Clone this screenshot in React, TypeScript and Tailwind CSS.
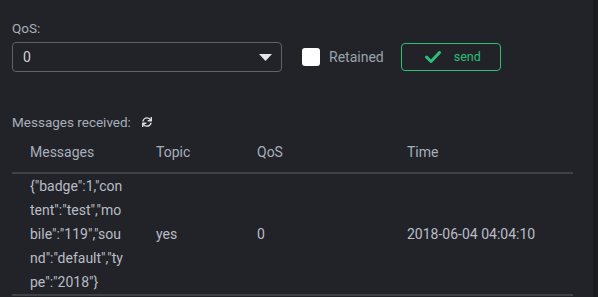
import React from "react";
import { FaSync } from "react-icons/fa";

export default function App() {
  return (
    <div className="flex w-[598px] h-[297px] overflow-hidden bg-[#222329]" style={{ fontFamily: "Roboto, 'Liberation Sans', sans-serif" }}>
      <div className="flex-1 pl-[12px] flex flex-col">
        <div className="mt-[20px] text-[13.5px] leading-[16px] text-[#a7afba]">QoS:</div>
        <div className="mt-[6px] flex items-center">
          <div className="w-[270px] h-[30px] border border-[#5a636e] rounded-[4px] flex items-center justify-between pl-[10px] pr-[9px]">
            <span className="text-[14px] text-[#cfd3d9]">0</span>
            <svg width="13" height="7" viewBox="0 0 13 7"><polygon points="0,0 13,0 6.5,7" fill="#e4e6ea" /></svg>
          </div>
          <div className="ml-[20px] w-[18px] h-[18px] bg-white rounded-[3px]" />
          <span className="ml-[9px] text-[14px] text-[#9ba3ad]">Retained</span>
          <button className="ml-[17px] w-[100px] h-[28px] border border-[#2bbf78] rounded-[4px] flex items-center pl-[22px]">
            <svg width="16" height="12" viewBox="0 0 16 12" className="ml-[1px]">
              <polyline points="1.5,6 6,10.5 14.5,1.5" fill="none" stroke="#2bbf78" strokeWidth="3" strokeLinecap="round" strokeLinejoin="round" />
            </svg>
            <span className="ml-[13px] text-[12.5px] text-[#2bbf78]">send</span>
          </button>
        </div>
        <div className="mt-[42px] flex items-center text-[13.5px] leading-[16px] text-[#a7afba]">
          <span>Messages received:</span>
          <FaSync className="ml-[11px] text-[#d8dbe0]" size={10} />
        </div>
        <table className="mt-[2px] table-fixed w-[561px] border-collapse text-[14px]">
          <colgroup>
            <col className="w-[126px]" />
            <col className="w-[101px]" />
            <col className="w-[150px]" />
            <col className="w-[184px]" />
          </colgroup>
          <thead>
            <tr className="border-b-2 border-[#404147]">
              <th className="h-[41px] pl-[18px] text-left font-normal text-[#a7afba]">Messages</th>
              <th className="pl-[18px] text-left font-normal text-[#a7afba]">Topic</th>
              <th className="pl-[18px] text-left font-normal text-[#a7afba]">QoS</th>
              <th className="pl-[18px] text-left font-normal text-[#a7afba]">Time</th>
            </tr>
          </thead>
          <tbody>
            <tr className="border-b-2 border-[#404147] text-[#b9bdc5]">
              <td className="pl-[18px] pr-[14px] leading-[24px] break-all">{'{"badge":1,"content":"test","mobile":"119","sound":"default","type":"2018"}'}</td>
              <td className="pl-[18px]">yes</td>
              <td className="pl-[18px]">0</td>
              <td className="pl-[18px]">2018-06-04 04:04:10</td>
            </tr>
          </tbody>
        </table>
      </div>
      <div className="w-[5px] h-full bg-[#1a1b1f]" />
    </div>
  );
}
